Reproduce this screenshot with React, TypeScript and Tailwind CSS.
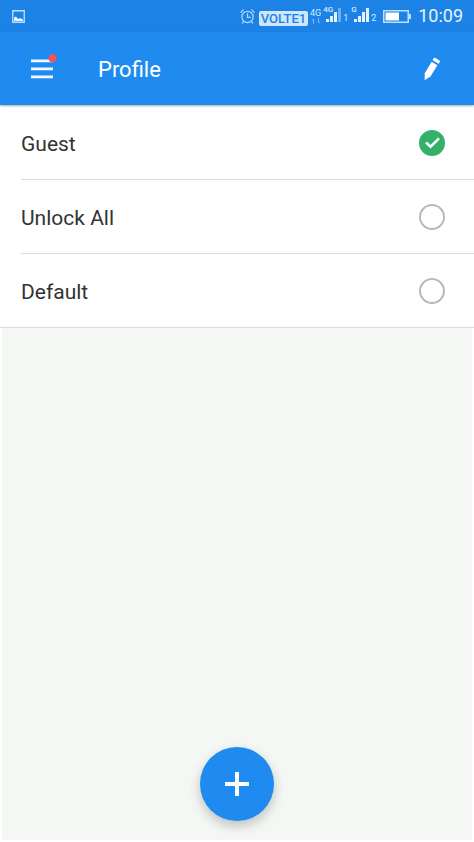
import { useState } from "react";

const profiles = [
  { id: "guest", name: "Guest" },
  { id: "unlock-all", name: "Unlock All" },
  { id: "default", name: "Default" },
];

export default function App() {
  const [active, setActive] = useState("guest");

  return (
    <div className="flex min-h-screen flex-col bg-white font-[Roboto,sans-serif] text-[#333333]">
      <StatusBar />
      <Header />
      <main className="flex flex-1 flex-col">
        <ProfileList active={active} onChange={setActive} />
        <div className="mx-0.5 mb-0.5 flex flex-1 items-end justify-center bg-[#f5f7f4] pb-[19px]">
          <button
            type="button"
            aria-label="Add profile"
            className="flex size-[74px] cursor-pointer items-center justify-center rounded-full bg-[#1f8af0] shadow-[0_5px_12px_rgba(0,0,0,0.22)]"
          >
            <svg viewBox="0 0 24 24" className="size-6" fill="#fff">
              <path d="M10 0h4v10h10v4H14v10h-4V14H0v-4h10z" />
            </svg>
          </button>
        </div>
      </main>
    </div>
  );
}

const StatusBar = () => (
  <div className="flex h-8 items-center justify-between bg-[#1d82e5] pr-[11px] pl-3 text-[#d6ebff]">
    <svg viewBox="0 0 13 13" className="size-[13px]">
      <path d="M.75.75h11.5v11.5H.75z" fill="none" stroke="#bfe2fb" strokeWidth="1.3" />
      <path d="M2 11V7.500l2-1 2 2.500 2-1 3 1.500V11z" fill="#e6f5ff" />
    </svg>
    <div className="flex items-center">
      <AlarmIcon />
      <span className="mt-1 ml-1 flex h-[15px] w-[49px] items-center justify-center rounded-[2px] bg-[#cfe7fc] text-[13px] leading-none font-medium text-[#1d82e5]">
        VOLTE1
      </span>
      <div className="ml-0.5 flex flex-col items-start text-[9px] leading-[9px]">
        <span>4G</span>
        <svg viewBox="0 0 10 6" className="ml-px h-1.5 w-2.5" fill="none" stroke="#7fbaf3">
          <path d="M2.500 6V1M1 2.500 2.500 1M7.500 0v5M7.500 5 9 3.500" />
        </svg>
      </div>
      <Signal network="4G" slot="1" level={3} />
      <Signal network="G" slot="2" level={4} />
      <svg viewBox="0 0 28 13" className="ml-1.5 h-[13px] w-7">
        <path d="M.75.75h24.500v11.500H.75z" fill="none" stroke="#bfe0fb" strokeWidth="1.500" />
        <path d="M2.500 2.500H16v8H2.500z" fill="#fff" />
        <path d="M26 4h2v5h-2z" fill="#bfe0fb" />
      </svg>
      <span className="ml-[7px] text-lg leading-none text-[#e6f3ff]">10:09</span>
    </div>
  </div>
);

const AlarmIcon = () => (
  <svg
    viewBox="0 0 16 16"
    className="size-[15px]"
    fill="none"
    stroke="#b5d8f9"
    strokeWidth="1.300"
    strokeLinecap="round"
  >
    <circle cx="8" cy="8.500" r="6" />
    <path d="M8 5v4h3M1 3.500 3.500 1M12.500 1 15 3.500M3.500 13.500 2.500 15M12.500 13.500l1 1.500" />
  </svg>
);

type SignalProps = {
  network: string;
  slot: string;
  level: number;
};

const Signal = ({ network, slot, level }: SignalProps) => (
  <div className="relative mb-1 ml-1 flex h-4 w-6 items-end">
    <span className="absolute top-0 -left-0.5 text-[8px] leading-none font-medium">
      {network}
    </span>
    <svg viewBox="0 0 18 14" className="h-3.5 w-[18px]" fill="#e3f2ff">
      {[3, 6, 10, 14].map((height, i) => (
        <rect
          key={height}
          x={1 + i * 4}
          y={14 - height}
          width="3"
          height={height}
          opacity={i < level ? 1 : 0.4}
        />
      ))}
    </svg>
    <span className="text-[9px] leading-[7px]">{slot}</span>
  </div>
);

const Header = () => (
  <header className="relative flex h-[73px] items-center bg-[#1f8af0] pr-[30px] pl-[30px] text-white shadow-[0_1px_2px_rgba(0,0,0,0.35)]">
    <button type="button" aria-label="Open menu" className="cursor-pointer">
      <svg viewBox="0 0 28 30" className="h-[30px] w-7">
        <path d="M1 5.500h22v2.800H1zM1 13.500h22v2.800H1zM1 21.500h22v2.800H1z" fill="#f1f9ff" />
        <circle cx="22.500" cy="4.200" r="4" fill="#fa5354" />
      </svg>
    </button>
    <h1 className="ml-10 flex-1 pt-0.5 text-[22px] leading-8">Profile</h1>
    <button type="button" aria-label="Edit profiles" className="cursor-pointer">
      <svg viewBox="0 0 24 24" className="size-6" fill="#fff">
        <path d="M4.600 23.200 4.800 16.300 11.600 4.800 17.400 8.200 10.500 19.600z" />
        <path d="M12.600 3.200 13.600 1.500Q14.300.4 15.400 1L19.200 3.200Q20.400 4 19.700 5.100L18.600 6.800z" />
      </svg>
    </button>
  </header>
);

type ProfileListProps = {
  active: string;
  onChange: (id: string) => void;
};

const ProfileList = ({ active, onChange }: ProfileListProps) => (
  <ul className="border-b border-[#dcdcdc] bg-white pt-px pl-[21px]">
    {profiles.map((profile) => (
      <li
        key={profile.id}
        className="border-b border-[#dcdcdc] last:border-b-0"
      >
        <label className="flex h-[73px] cursor-pointer items-center justify-between pr-7">
          <span className="pt-0.5 text-[21px] leading-8">{profile.name}</span>
          <span className="relative flex size-7">
            <input
              type="radio"
              name="profile"
              value={profile.id}
              checked={active === profile.id}
              onChange={() => onChange(profile.id)}
              className="peer m-px size-[26px] cursor-pointer appearance-none rounded-full border-2 border-[#b9b9b9] checked:border-[#34b06b] checked:bg-[#34b06b]"
            />
            <svg
              viewBox="0 0 28 28"
              className="pointer-events-none absolute inset-0 hidden size-7 peer-checked:block"
              fill="none"
              stroke="#fff"
              strokeWidth="2.600"
            >
              <path d="M8 13.500l4.500 4.300 8.500-8.500" />
            </svg>
          </span>
        </label>
      </li>
    ))}
  </ul>
);
